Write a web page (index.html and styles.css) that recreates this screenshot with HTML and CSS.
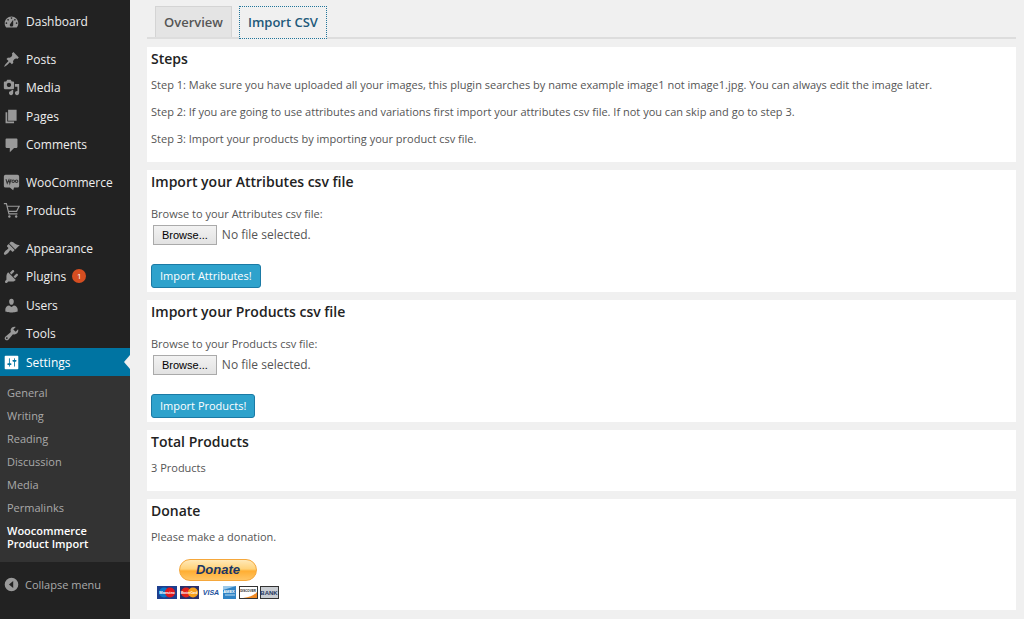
FILE: index.html
```html
<!DOCTYPE html>
<html lang="en">
<head>
    <meta charset="UTF-8">
    <meta name="viewport" content="width=device-width, initial-scale=1">
    <title>Woocommerce Product Import</title>
    <link rel="stylesheet" href="styles.css">
</head>
<body>

<nav class="sidebar">
    <ul class="menu">
        <li><a href="#"><svg viewBox="0 0 20 20"><path fill-rule="evenodd" d="M3.76 17h12.48c1.1-1.37 1.76-3.11 1.76-5 0-4.42-3.58-8-8-8s-8 3.58-8 8c0 1.89.66 3.63 1.76 5zM10 5c.55 0 1 .45 1 1s-.45 1-1 1-1-.45-1-1 .45-1 1-1zM6 7c.55 0 1 .45 1 1s-.45 1-1 1-1-.45-1-1 .45-1 1-1zm8 0c.55 0 1 .45 1 1s-.45 1-1 1-1-.45-1-1 .45-1 1-1zm-5.37 5.55L12 8v6c0 1.1-.9 2-2 2s-2-.9-2-2c0-.57.24-1.08.63-1.45zM4 11c.55 0 1 .45 1 1s-.45 1-1 1-1-.45-1-1 .45-1 1-1zm12 0c.55 0 1 .45 1 1s-.45 1-1 1-1-.45-1-1 .45-1 1-1z"/></svg>Dashboard</a></li>
    </ul>
    <ul class="menu">
        <li><a href="#"><svg viewBox="0 0 20 20"><path d="M10.44 3.02l1.82-1.82 6.36 6.35-1.83 1.82c-1.05-.68-2.48-.57-3.41.36l-.75.75c-.92.93-1.04 2.35-.35 3.41l-1.83 1.82-2.41-2.41-2.8 2.79c-.42.42-3.38 2.71-3.8 2.29s1.86-3.39 2.28-3.81l2.79-2.79L4.1 9.36l1.83-1.82c1.05.69 2.48.57 3.4-.36l.75-.75c.93-.92 1.05-2.35.36-3.41z"/></svg>Posts</a></li>
        <li><a href="#"><svg viewBox="0 0 20 20"><path fill-rule="evenodd" d="M13 11V4c0-.55-.45-1-1-1h-1.67L9 1H5L3.67 3H2c-.55 0-1 .45-1 1v7c0 .55.45 1 1 1h10c.55 0 1-.45 1-1zM7 4.5c1.38 0 2.5 1.12 2.5 2.5S8.38 9.5 7 9.5 4.5 8.38 4.5 7 5.62 4.5 7 4.5zM14 6h5v10.5c0 1.38-1.12 2.5-2.5 2.5S14 17.88 14 16.5s1.12-2.5 2.5-2.5c.17 0 .34.02.5.05V9h-3V6zm-4 8.05V13h2v3.5c0 1.38-1.12 2.5-2.5 2.5S7 17.88 7 16.5 8.12 14 9.5 14c.17 0 .34.02.5.05z"/></svg>Media</a></li>
        <li><a href="#"><svg viewBox="0 0 20 20"><path d="M6 15V2h10v13H6zm-1 1h8v2H3V5h2v11z"/></svg>Pages</a></li>
        <li><a href="#"><svg viewBox="0 0 20 20"><path d="M4 3h12c.6 0 1 .4 1 1v9c0 .6-.4 1-1 1h-3l-5 5v-5H4c-.6 0-1-.4-1-1V4c0-.6.4-1 1-1z"/></svg>Comments</a></li>
    </ul>
    <ul class="menu">
        <li><a href="#"><svg viewBox="0 0 20 20"><path d="M3 1h14q2 0 2 2v11q0 2-2 2h-4l-1 3-4-3H3q-2 0-2-2V3q0-2 2-2z"/><path class="woo-mark" d="M3.5 6l1.5 5 2-4 1 4 1.5-5"/><circle class="woo-mark" cx="12" cy="8.5" r="1.5"/><circle class="woo-mark" cx="16" cy="8.5" r="1.5"/></svg>WooCommerce</a></li>
        <li><a href="#"><svg viewBox="0 0 20 20"><path class="line" d="M1 2h3l3 12h10M5 5h14l-3 6H6.5"/><circle cx="7.5" cy="17" r="1.4"/><circle cx="15.5" cy="17" r="1.4"/></svg>Products</a></li>
    </ul>
    <ul class="menu">
        <li><a href="#"><svg viewBox="0 0 20 20"><path d="M14.48 11.06L7.41 3.99l1.5-1.5c.5-.56 2.3-.47 3.51.32 1.21.8 1.43 1.28 2.91 2.1 1.18.64 2.45 1.26 4.45.85zm-.71.71L6.7 4.7 4.93 6.47c-.39.39-.39 1.02 0 1.41l1.06 1.06c.39.39.39 1.03 0 1.42-.6.6-1.43 1.11-2.21 1.69-.35.26-.7.53-1.01.84C1.43 14.23.4 16.08 1.4 17.07c.99 1 2.84-.03 4.18-1.36.31-.31.58-.66.85-1.02.57-.78 1.08-1.61 1.69-2.21.39-.39 1.02-.39 1.41 0l1.06 1.06c.39.39 1.02.39 1.41 0z"/></svg>Appearance</a></li>
        <li><a href="#"><svg viewBox="0 0 20 20"><path d="M13.11 4.36L9.87 7.6 8 5.73l3.24-3.24c.35-.34 1.05-.2 1.56.32.52.51.66 1.21.31 1.55zm-8 1.77l.91-1.12 9.01 9.01-1.19.84c-.71.71-2.63 1.16-3.82 1.16H6.14L4.9 17.26c-.59.59-1.54.59-2.12 0-.59-.58-.59-1.53 0-2.12l1.24-1.24v-3.88c0-1.13.4-3.19 1.09-3.89zm7.26 3.97l3.24-3.24c.34-.35 1.04-.21 1.55.31.52.51.66 1.21.31 1.55l-3.24 3.25z"/></svg>Plugins<span class="count">1</span></a></li>
        <li><a href="#"><svg viewBox="0 0 20 20"><path d="M10 9.25c-2.27 0-2.73-3.44-2.73-3.44C7 4.02 7.82 2 9.97 2c2.16 0 2.98 2.02 2.71 3.81 0 0-.41 3.44-2.68 3.44zm0 2.57L12.72 10c2.39 0 4.52 2.33 4.52 4.53v2.49s-3.65 1.13-7.24 1.13c-3.65 0-7.24-1.13-7.24-1.13v-2.49c0-2.25 1.94-4.48 4.47-4.48z"/></svg>Users</a></li>
        <li><a href="#"><svg viewBox="0 0 20 20"><path fill-rule="evenodd" d="M16.68 9.77c-1.34 1.34-3.3 1.67-4.95.99l-5.41 6.52c-.99.99-2.59.99-3.58 0s-.99-2.59 0-3.57l6.52-5.42c-.68-1.65-.35-3.61.99-4.95 1.28-1.28 3.12-1.62 4.72-1.06l-2.89 2.89 2.82 2.82 2.86-2.87c.53 1.58.18 3.39-1.08 4.65zM3.81 16.21c.4.39 1.04.39 1.43 0 .4-.4.4-1.04 0-1.43-.39-.4-1.03-.4-1.43 0-.39.39-.39 1.03 0 1.43z"/></svg>Tools</a></li>
        <li class="current"><a href="#"><svg viewBox="0 0 20 20"><path fill-rule="evenodd" d="M18 17V3c0-.55-.45-1-1-1H3c-.55 0-1 .45-1 1v14c0 .55.45 1 1 1h14c.55 0 1-.45 1-1zM8 11h1c.55 0 1 .45 1 1s-.45 1-1 1H8v1.5c0 .28-.22.5-.5.5s-.5-.22-.5-.5V13H6c-.55 0-1-.45-1-1s.45-1 1-1h1V5.5c0-.28.22-.5.5-.5s.5.22.5.5V11zm5-2h-1c-.55 0-1-.45-1-1s.45-1 1-1h1V5.5c0-.28.22-.5.5-.5s.5.22.5.5V7h1c.55 0 1 .45 1 1s-.45 1-1 1h-1v5.5c0 .28-.22.5-.5.5s-.5-.22-.5-.5V9z"/></svg>Settings</a></li>
    </ul>
    <ul class="submenu">
        <li><a href="#">General</a></li>
        <li><a href="#">Writing</a></li>
        <li><a href="#">Reading</a></li>
        <li><a href="#">Discussion</a></li>
        <li><a href="#">Media</a></li>
        <li><a href="#">Permalinks</a></li>
        <li><a href="#" class="active">Woocommerce Product Import</a></li>
    </ul>
    <button type="button" class="collapse"><svg viewBox="0 0 20 20"><path fill-rule="evenodd" d="M10 2a8 8 0 1 0 0 16 8 8 0 0 0 0-16zm2 4v8l-5-4z"/></svg>Collapse menu</button>
</nav>

<main class="content">
    <div class="tabs">
        <a href="#" class="tab">Overview</a>
        <a href="#" class="tab tab-active">Import CSV</a>
    </div>

    <section class="panel">
        <h2>Steps</h2>
        <p>Step 1: Make sure you have uploaded all your images, this plugin searches by name example image1 not image1.jpg. You can always edit the image later.</p>
        <p>Step 2: If you are going to use attributes and variations first import your attributes csv file. If not you can skip and go to step 3.</p>
        <p>Step 3: Import your products by importing your product csv file.</p>
    </section>

    <section class="panel">
        <h2>Import your Attributes csv file</h2>
        <form class="upload">
            <label for="attributesFile">Browse to your Attributes csv file:</label>
            <label class="file">
                <input type="file" id="attributesFile" accept=".csv">
                <span class="browse">Browse...</span>
                <span class="file-name">No file selected.</span>
            </label>
            <button type="submit" class="button-primary">Import Attributes!</button>
        </form>
    </section>

    <section class="panel">
        <h2>Import your Products csv file</h2>
        <form class="upload">
            <label for="productsFile">Browse to your Products csv file:</label>
            <label class="file">
                <input type="file" id="productsFile" accept=".csv">
                <span class="browse">Browse...</span>
                <span class="file-name">No file selected.</span>
            </label>
            <button type="submit" class="button-primary">Import Products!</button>
        </form>
    </section>

    <section class="panel">
        <h2>Total Products</h2>
        <p>3 Products</p>
    </section>

    <section class="panel">
        <h2>Donate</h2>
        <p>Please make a donation.</p>
        <form class="donate">
            <button type="submit" class="donate-button">Donate</button>
            <svg class="cards" viewBox="0 0 122 13">
                <!-- Maestro -->
                <rect width="20" height="13" fill="#1d3f8f"/>
                <circle cx="7" cy="6.5" r="5" fill="#0a77c8"/>
                <circle cx="13" cy="6.5" r="5" fill="#e0161d"/>
                <text x="10" y="8" fill="#fff">Maestro</text>
                <!-- MasterCard -->
                <rect x="23" width="19" height="13" fill="#27306d"/>
                <circle cx="29" cy="6.5" r="5" fill="#e2231a"/>
                <circle cx="36" cy="6.5" r="5" fill="#f5a01d"/>
                <text class="small" x="32" y="8" fill="#fff">MasterCard</text>
                <!-- Visa -->
                <text class="visa" x="54" y="9">VISA</text>
                <!-- American Express -->
                <rect x="66" width="13" height="13" fill="#2f83c5"/>
                <path d="M66 0h13L66 4z" fill="#9cc9ea"/>
                <text x="72" y="7" fill="#fff">AMEX</text>
                <path d="M68 9h10" stroke="#b9dcf3"/>
                <!-- Discover -->
                <rect x="82.5" y=".5" width="18" height="12" fill="#fff" stroke="#333"/>
                <path d="M100 6v6H86q10-1 14-6z" fill="#f08a24"/>
                <text class="small" x="91" y="6" fill="#222">DISCOVER</text>
                <!-- Bank -->
                <rect x="103.5" y=".5" width="18" height="12" fill="#c9cdd2" stroke="#333"/>
                <text class="bank" x="112" y="9">BANK</text>
            </svg>
        </form>
    </section>
</main>

<script>
    // show the chosen file next to the browse button
    document.querySelectorAll(".file input").forEach(input => {
        input.addEventListener("change", () => {
            const name = input.parentElement.querySelector(".file-name");
            name.textContent = input.files.length ? input.files[0].name : "No file selected.";
        });
    });
</script>
</body>
</html>
```
FILE: styles.css
```css
* {
    box-sizing: border-box;
}

body {
    display: flex;
    min-height: 100vh;
    margin: 0;
    background: #f0f0f0;
    color: #555;
    font-family: "Open Sans", sans-serif;
    font-size: 11px;
}

a {
    color: inherit;
    text-decoration: none;
}

ul {
    margin: 0;
    padding: 0;
    list-style: none;
}

/* sidebar */
.sidebar {
    flex: none;
    width: 130px;
    padding-top: 7px;
    background: #222;
    color: #eee;
}

.sidebar svg {
    flex: none;
    width: 17px;
    height: 17px;
    fill: #999;
}

.menu {
    margin-bottom: 10px;
    font-size: 12px;
}

.menu li:nth-child(even) {
    margin-bottom: 1px;
}

.menu a {
    display: flex;
    align-items: center;
    gap: 6px;
    height: 28px;
    padding-left: 3px;
}

.menu .line {
    fill: none;
    stroke: #999;
    stroke-width: 1.4;
}

.menu .woo-mark {
    fill: none;
    stroke: #333;
    stroke-width: 1.3;
}

.menu .current {
    position: relative;
    background: #0074a2;
    color: #fff;
}

.menu .current svg {
    fill: #fff;
}

.menu .current::after {
    content: "";
    position: absolute;
    top: 7px;
    right: 0;
    border: 7px solid transparent;
    border-left: 0;
    border-right: 6px solid #f0f0f0;
}

.menu:has(.current) {
    margin-bottom: 0;
}

.count {
    width: 14px;
    border-radius: 7px;
    background: #d54e21;
    color: #fff;
    font-size: 8px;
    line-height: 14px;
    text-align: center;
}

.submenu {
    padding: 5px 0 7px;
    background: #333;
    color: #aaa;
}

.submenu a {
    display: block;
    padding: 5px 40px 5px 7px;
    line-height: 13px;
}

.submenu .active {
    color: #fff;
    font-weight: 600;
}

.collapse {
    display: flex;
    align-items: center;
    gap: 5px;
    margin-top: 11px;
    padding: 3px;
    border: 0;
    background: none;
    color: #aaa;
    font: inherit;
    cursor: pointer;
}

/* content */
.content {
    flex: 1;
    padding: 6px 8px 0 17px;
}

.tabs {
    display: flex;
    gap: 7px;
    margin-bottom: 8px;
    padding-left: 8px;
    border-bottom: 2px solid #ddd;
}

.tab {
    padding: 5px 8px;
    border: 1px solid #d4d4d4;
    border-bottom: 0;
    background: #e4e4e4;
    font-size: 13px;
    font-weight: 600;
    line-height: 20px;
}

.tab-active {
    margin-bottom: -2px;
    border: 1px dotted #21759b;
    background: #f0f0f0;
    color: #21597a;
}

.panel {
    margin-bottom: 8px;
    padding: 3px 4px 4px;
    background: #fff;
}

.panel h2 {
    margin: 0 0 9px;
    color: #222;
    font-size: 14px;
    font-weight: 600;
    line-height: 18px;
}

.panel p {
    margin: 0 0 11px;
    line-height: 16px;
}

.upload {
    display: flex;
    flex-direction: column;
    align-items: flex-start;
    padding-top: 6px;
    line-height: 16px;
}

.file {
    display: flex;
    align-items: center;
    gap: 5px;
    margin: 3px 0 19px 2px;
    font-size: 12px;
}

.file input {
    position: absolute;
    width: 1px;
    height: 1px;
    opacity: 0;
}

.browse {
    padding: 1px 8px;
    border: 1px solid #aaa;
    background: linear-gradient(#f2f2f2, #e2e2e2);
    color: #000;
    font-family: "Liberation Sans", Arial, sans-serif;
    font-size: 11px;
}

.file input:focus-visible + .browse {
    outline: 1px dotted #21759b;
}

.button-primary {
    padding: 3px 8px;
    border: 1px solid #1b7aa5;
    border-radius: 3px;
    background: #2ea2cc;
    color: #fff;
    font: inherit;
    line-height: 16px;
    cursor: pointer;
}

.donate {
    display: flex;
    flex-direction: column;
    align-items: center;
    gap: 5px;
    width: 122px;
    margin: 14px 6px 7px;
}

.donate-button {
    width: 78px;
    padding: 0;
    border: 1px solid #f5a73b;
    border-radius: 11px;
    background: linear-gradient(#ffe9b8, #ffd27a 45%, #ffae32 55%, #ffc565);
    color: #1a3665;
    font: italic bold 13px/20px "Liberation Sans", Arial, sans-serif;
    cursor: pointer;
}

.cards {
    width: 122px;
    height: 13px;
    font-family: "Liberation Sans", Arial, sans-serif;
    font-size: 4px;
    font-weight: bold;
    text-anchor: middle;
}

.cards .small {
    font-size: 3px;
}

.cards .visa {
    fill: #1a4f9c;
    font-size: 7px;
    font-style: italic;
}

.cards .bank {
    fill: #26375e;
    font-size: 6px;
}
```
